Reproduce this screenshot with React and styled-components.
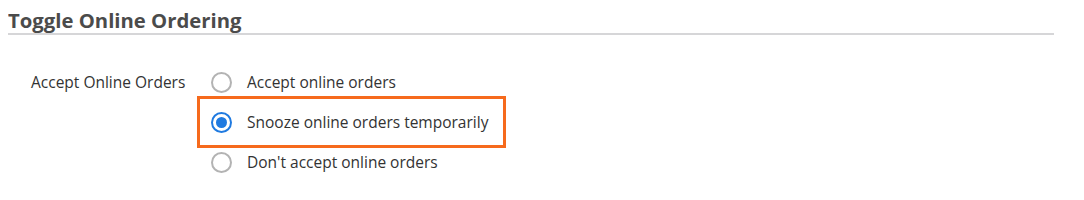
import React from 'react'
import styled, { createGlobalStyle } from 'styled-components'

const Global = createGlobalStyle`
  body {
    margin: 8px;
    background: #fff;
    font-family: "Open Sans", "Liberation Sans", sans-serif;
    color: #333;
  }
`

const Section = styled.section`
  width: 1046px;
`

const Title = styled.h2`
  margin: 0;
  padding: 0 0 1px 0;
  font-family: "Open Sans", sans-serif;
  font-weight: 700;
  font-size: 20.3px;
  line-height: 24px;
  color: #4b4b4b;
  border-bottom: 2px solid #d6d6d8;
`

const Row = styled.div`
  display: flex;
  align-items: flex-start;
  margin-top: 27px;
`

const Label = styled.div`
  width: 166px;
  padding-left: 23px;
  font-size: 15.5px;
  line-height: 40px;
  color: #333;
`

const Options = styled.div`
  display: flex;
  flex-direction: column;
`

const Option = styled.label`
  box-sizing: border-box;
  display: flex;
  align-items: center;
  gap: 15px;
  width: 309px;
  height: ${p => (p.$highlight ? '52px' : '40px')};
  padding-left: 11px;
  margin: ${p => (p.$highlight ? '-6px 0' : '0')};
  border: 3px solid ${p => (p.$highlight ? '#f66a1c' : 'transparent')};
  font-size: 15.5px;
  color: #333;
  cursor: pointer;
`

const Radio = styled.span`
  box-sizing: border-box;
  width: 21px;
  height: 21px;
  border-radius: 50%;
  border: 2px solid ${p => (p.$checked ? '#1f7ae0' : '#b3b3b3')};
  display: flex;
  align-items: center;
  justify-content: center;
  flex-shrink: 0;

  &::after {
    content: '';
    width: 11px;
    height: 11px;
    border-radius: 50%;
    background: #1f7ae0;
    display: ${p => (p.$checked ? 'block' : 'none')};
  }
`

const options = [
  { id: 'accept', text: 'Accept online orders' },
  { id: 'snooze', text: 'Snooze online orders temporarily', checked: true },
  { id: 'none', text: "Don't accept online orders" },
]

export default function App() {
  return (
    <>
      <Global />
      <Section>
        <Title>Toggle Online Ordering</Title>
        <Row>
          <Label>Accept Online Orders</Label>
          <Options>
            {options.map(o => (
              <Option key={o.id} $highlight={o.checked}>
                <Radio $checked={o.checked} />
                {o.text}
              </Option>
            ))}
          </Options>
        </Row>
      </Section>
    </>
  )
}
